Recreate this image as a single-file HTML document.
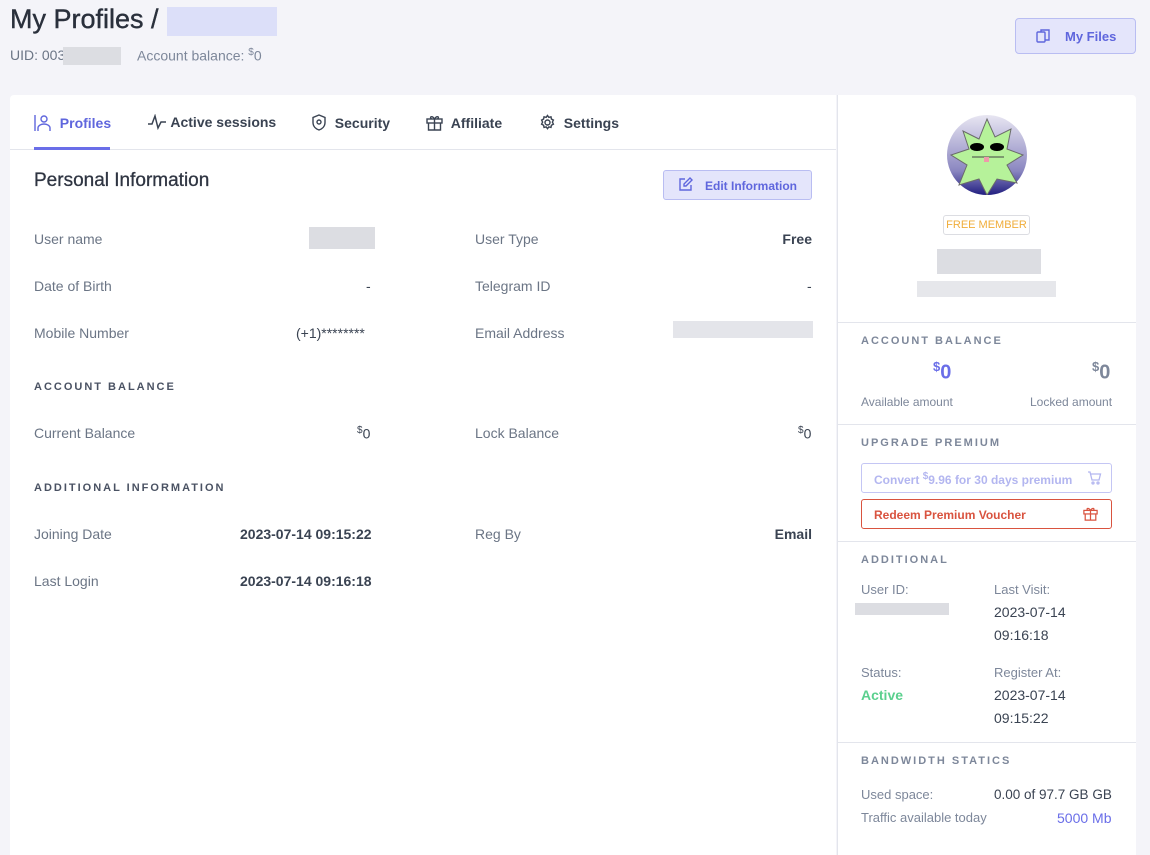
<!DOCTYPE html>
<html><head><style>
*{box-sizing:border-box;margin:0;padding:0}
body{width:1150px;height:837px;overflow:hidden;background:#f4f4f9;font-family:"Liberation Sans",sans-serif;color:#3a4352;position:relative}
.abs{position:absolute}
.lbl{color:#6b7585;font-size:14px}
.val{color:#3a4352;font-size:14px}
.hd{font-size:11px;font-weight:bold;letter-spacing:2px;color:#4a5263}
.rhd{font-size:11px;font-weight:bold;letter-spacing:2px;color:#7d879a}
.blur{background:#dcdde2}
sup{font-size:10px}
</style></head><body>
<div class="abs" style="left:10px;top:4px;font-size:27px;color:#2a303c;-webkit-text-stroke:0.4px #2a303c">My Profiles /</div>
<div class="abs" style="left:167px;top:7px;width:110px;height:29px;background:#dcdff9"></div>
<div class="abs" style="left:10px;top:47px;font-size:14px;color:#6b7585">UID: 003</div>
<div class="abs blur" style="left:63px;top:47px;width:58px;height:18px"></div>
<div class="abs" style="left:137px;top:47px;font-size:14px;color:#7d879a">Account balance: <sup>$</sup>0</div>
<div class="abs" style="left:1015px;top:18px;width:121px;height:36px;border:1px solid #b9bdf2;background:#e4e5fb;border-radius:4px;color:#5f66dd;font-size:13px;font-weight:bold;padding:10px 0 0 49px">My Files</div>
<svg class="abs" style="left:1035px;top:28px" width="16" height="16" viewBox="0 0 16 16" fill="none" stroke="#5f66dd" stroke-width="1.4"><rect x="2" y="4" width="8" height="10" rx="1"/><path d="M6 4V2h8v10h-4"/></svg>

<div class="abs" style="left:10px;top:95px;width:826px;height:760px;background:#fff;border-radius:4px 0 0 0"></div>
<div class="abs" style="left:837px;top:95px;width:299px;height:760px;background:#fff;border-radius:0 4px 0 0;border-left:1px solid #e3e5ec"></div>
<div class="abs" style="left:10px;top:149px;width:826px;height:1px;background:#e3e5ec"></div>
<div class="abs" style="left:34px;top:147px;width:76px;height:3px;background:#6a6ee8"></div>
<div class="abs" style="left:34px;top:114px;font-size:14px;font-weight:bold;color:#5f66dd">
<svg width="18" height="18" viewBox="0 0 18 18" fill="none" stroke="#5f66dd" stroke-width="1.4" style="vertical-align:-4px"><path d="M1 1v16"/><circle cx="10" cy="5" r="3"/><path d="M4 17v-3a6 4 0 0 1 12 0v3"/></svg> &nbsp;Profiles</div>
<div class="abs" style="left:147px;top:114px;font-size:14px;font-weight:bold;color:#3a4352">
<svg width="20" height="16" viewBox="0 0 20 16" fill="none" stroke="#3a4352" stroke-width="1.5" style="vertical-align:-3px"><path d="M1 10h4l3-8 3 12 3-6h5"/></svg> Active sessions</div>
<div class="abs" style="left:311px;top:114px;font-size:14px;font-weight:bold">
<svg width="16" height="17" viewBox="0 0 16 17" fill="none" stroke="#3a4352" stroke-width="1.4" style="vertical-align:-3px"><path d="M8 1l6 2.5v5c0 4-3 6.5-6 7.5-3-1-6-3.5-6-7.5v-5z"/><circle cx="8" cy="8" r="2"/></svg> &nbsp;Security</div>
<div class="abs" style="left:426px;top:114px;font-size:14px;font-weight:bold">
<svg width="17" height="17" viewBox="0 0 17 17" fill="none" stroke="#3a4352" stroke-width="1.4" style="vertical-align:-3px"><rect x="1" y="5" width="15" height="4"/><path d="M2.5 9v7h12V9M8.5 5v11M8.5 5C6 1 3 3 5.5 5M8.5 5c2.5-4 5.5-2 3 0"/></svg> &nbsp;Affiliate</div>
<div class="abs" style="left:539px;top:114px;font-size:14px;font-weight:bold">
<svg width="17" height="17" viewBox="0 0 17 17" fill="none" stroke="#3a4352" stroke-width="1.4" style="vertical-align:-3px"><circle cx="8.5" cy="8.5" r="2.5"/><path d="M8.5 1.5l1.3 1.8 2.2-.5.4 2.2 2 1.1-1 2 1 2.1-2 1-.4 2.2-2.2-.5-1.3 1.8-1.3-1.8-2.2.5-.4-2.2-2-1 1-2.1-1-2 2-1.1.4-2.2 2.2.5z"/></svg> &nbsp;Settings</div>

<div class="abs" style="left:34px;top:170px;font-size:19px;color:#2f3542;-webkit-text-stroke:0.3px #2f3542">Personal Information</div>
<div class="abs" style="left:663px;top:170px;width:149px;height:30px;border:1px solid #b9bdf2;background:#e4e5fb;border-radius:3px;color:#5f66dd;font-size:12px;font-weight:bold;padding:8px 0 0 41px">Edit Information</div>
<svg class="abs" style="left:678px;top:177px" width="15" height="15" viewBox="0 0 15 15" fill="none" stroke="#5f66dd" stroke-width="1.4"><path d="M7 2H2v11h11V8M12 1l2 2-6 6H6V7z"/></svg>

<div class="abs lbl" style="left:34px;top:231px">User name</div><div class="abs blur" style="left:309px;top:227px;width:66px;height:22px"></div>
<div class="abs lbl" style="left:475px;top:231px">User Type</div><div class="abs val" style="right:338px;top:231px;font-weight:bold">Free</div>
<div class="abs lbl" style="left:34px;top:278px">Date of Birth</div><div class="abs val" style="left:366px;top:278px">-</div>
<div class="abs lbl" style="left:475px;top:278px">Telegram ID</div><div class="abs val" style="left:807px;top:278px">-</div>
<div class="abs lbl" style="left:34px;top:325px">Mobile Number</div><div class="abs val" style="left:296px;top:325px">(+1)********</div>
<div class="abs lbl" style="left:475px;top:325px">Email Address</div><div class="abs blur" style="left:673px;top:321px;width:140px;height:17px;background:#e4e5ea"></div>
<div class="abs hd" style="left:34px;top:381px">ACCOUNT BALANCE</div>
<div class="abs lbl" style="left:34px;top:425px">Current Balance</div><div class="abs val" style="left:357px;top:425px"><sup>$</sup>0</div>
<div class="abs lbl" style="left:475px;top:425px">Lock Balance</div><div class="abs val" style="left:798px;top:425px"><sup>$</sup>0</div>
<div class="abs hd" style="left:34px;top:482px">ADDITIONAL INFORMATION</div>
<div class="abs lbl" style="left:34px;top:526px">Joining Date</div><div class="abs val" style="left:240px;top:526px;font-weight:bold">2023-07-14 09:15:22</div>
<div class="abs lbl" style="left:475px;top:526px">Reg By</div><div class="abs val" style="right:338px;top:526px;font-weight:bold">Email</div>
<div class="abs lbl" style="left:34px;top:573px">Last Login</div><div class="abs val" style="left:240px;top:573px;font-weight:bold">2023-07-14 09:16:18</div>

<svg class="abs" style="left:947px;top:115px" width="80" height="80" viewBox="0 0 80 80"><defs><linearGradient id="g" x1="0" y1="0" x2="0" y2="1"><stop offset="0" stop-color="#e8e6f2"/><stop offset=".7" stop-color="#8a86c0"/><stop offset="1" stop-color="#221f80"/></linearGradient></defs><circle cx="40" cy="40" r="40" fill="url(#g)"/><path d="M40 4l8 18 16-8-4 20 16 6-16 10 10 18-20-4-10 16-8-16-20 6 8-20-16-10 18-6-6-18 16 8z" fill="#b6f29a" stroke="#6a6a6a"/><ellipse cx="30" cy="32" rx="7" ry="4" fill="#000"/><ellipse cx="50" cy="32" rx="7" ry="4" fill="#000"/><path d="M25 42h32" stroke="#444"/><rect x="37" y="42" width="5" height="5" fill="#e9a"/></svg>
<div class="abs" style="left:943px;top:215px;width:87px;height:20px;border:1px solid #dcdde2;border-radius:3px;color:#f0ad3a;font-size:11px;text-align:center;padding-top:3px">FREE MEMBER</div>
<div class="abs blur" style="left:937px;top:249px;width:104px;height:25px"></div>
<div class="abs blur" style="left:917px;top:281px;width:139px;height:16px;background:#e6e7eb"></div>
<div class="abs" style="left:837px;top:322px;width:299px;height:1px;background:#e3e5ec"></div>
<div class="abs rhd" style="left:861px;top:335px">ACCOUNT BALANCE</div>
<div class="abs" style="left:933px;top:359px;font-size:20px;font-weight:bold;color:#6a6ee8"><sup style="font-size:13px">$</sup>0</div>
<div class="abs" style="left:1092px;top:359px;font-size:20px;font-weight:bold;color:#7d879a"><sup style="font-size:13px">$</sup>0</div>
<div class="abs" style="left:861px;top:395px;font-size:12px;color:#7d879a">Available amount</div>
<div class="abs" style="left:1030px;top:395px;font-size:12px;color:#7d879a">Locked amount</div>
<div class="abs" style="left:837px;top:424px;width:299px;height:1px;background:#e3e5ec"></div>
<div class="abs rhd" style="left:861px;top:437px">UPGRADE PREMIUM</div>
<div class="abs" style="left:861px;top:463px;width:251px;height:30px;border:1px solid #c4c6f4;border-radius:3px;color:#b3b6f0;font-size:12px;font-weight:bold;padding:7px 0 0 12px">Convert <sup>$</sup>9.96 for 30 days premium</div>
<svg class="abs" style="left:1087px;top:470px" width="15" height="15" viewBox="0 0 15 15" fill="none" stroke="#b3b6f0" stroke-width="1.3"><path d="M1 2h2l2 8h7l1.5-6H4"/><circle cx="6" cy="13" r="1"/><circle cx="11" cy="13" r="1"/></svg>
<div class="abs" style="left:861px;top:499px;width:251px;height:30px;border:1px solid #d9533f;border-radius:3px;color:#d9533f;font-size:12px;font-weight:bold;padding:8px 0 0 12px">Redeem Premium Voucher</div>
<svg class="abs" style="left:1083px;top:506px" width="15" height="15" viewBox="0 0 17 17" fill="none" stroke="#d9533f" stroke-width="1.4"><rect x="1" y="5" width="15" height="4"/><path d="M2.5 9v7h12V9M8.5 5v11M8.5 5C6 1 3 3 5.5 5M8.5 5c2.5-4 5.5-2 3 0"/></svg>
<div class="abs" style="left:837px;top:541px;width:299px;height:1px;background:#e3e5ec"></div>
<div class="abs rhd" style="left:861px;top:554px">ADDITIONAL</div>
<div class="abs" style="left:861px;top:582px;font-size:13px;color:#7d879a">User ID:</div>
<div class="abs blur" style="left:855px;top:603px;width:94px;height:12px"></div>
<div class="abs" style="left:994px;top:578px;font-size:13px;color:#7d879a;line-height:23px">Last Visit:<br><span style="color:#3a4352;font-size:14px">2023-07-14<br>09:16:18</span></div>
<div class="abs" style="left:861px;top:661px;font-size:13px;color:#7d879a;line-height:23px">Status:<br><b style="color:#5bd08e;font-size:14px">Active</b></div>
<div class="abs" style="left:994px;top:661px;font-size:13px;color:#7d879a;line-height:23px">Register At:<br><span style="color:#3a4352;font-size:14px">2023-07-14<br>09:15:22</span></div>
<div class="abs" style="left:837px;top:742px;width:299px;height:1px;background:#e3e5ec"></div>
<div class="abs rhd" style="left:861px;top:755px">BANDWIDTH STATICS</div>
<div class="abs" style="left:861px;top:787px;font-size:13px;color:#7d879a">Used space:</div>
<div class="abs" style="left:994px;top:787px;font-size:13.5px;color:#3a4352">0.00 of 97.7 GB GB</div>
<div class="abs" style="left:861px;top:810px;font-size:13px;color:#7d879a">Traffic available today</div>
<div class="abs" style="left:1057px;top:810px;font-size:14px;color:#6a6ee8">5000 Mb</div>
</body></html>
